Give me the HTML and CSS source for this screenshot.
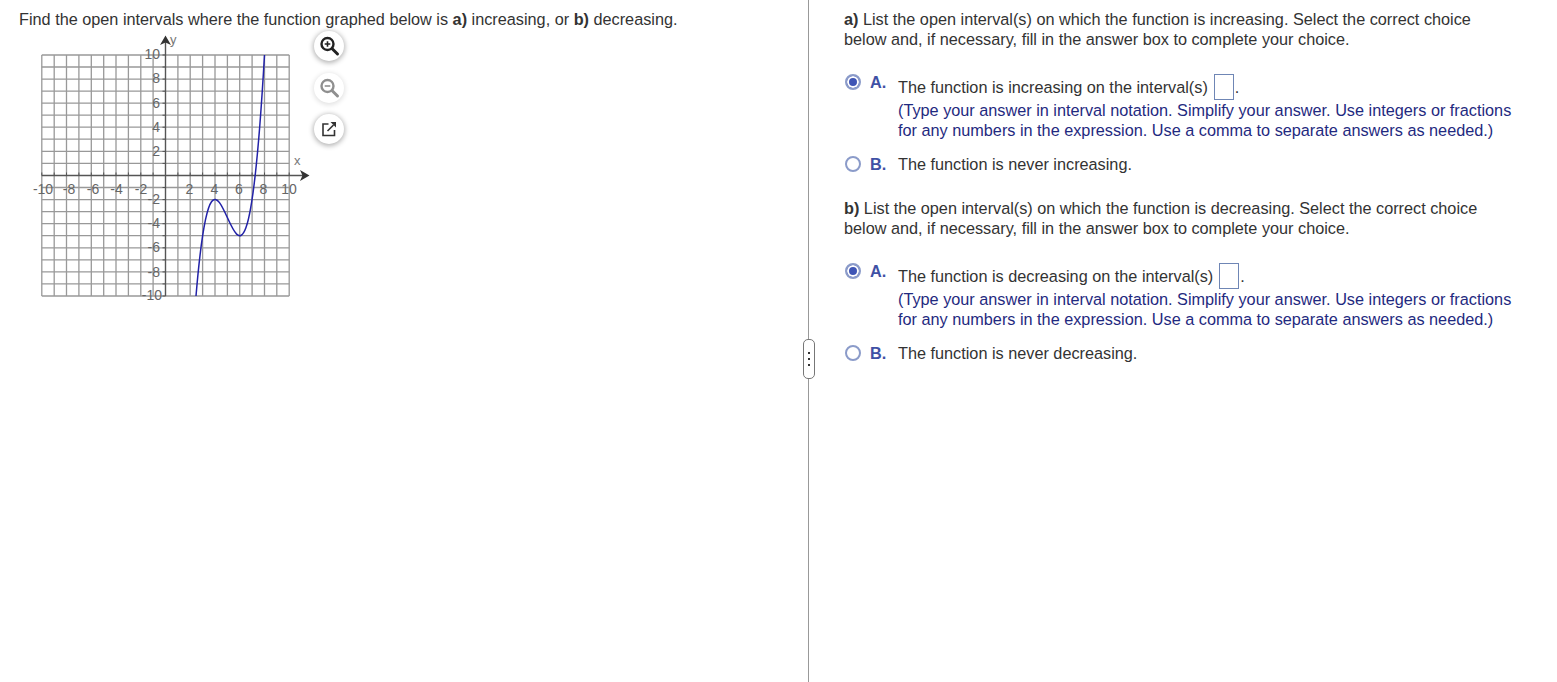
FILE: index.html
```html
<!DOCTYPE html>
<html lang="en">
<head>
<meta charset="UTF-8">
<meta name="viewport" content="width=device-width, initial-scale=1.0">
<title>Increasing and decreasing intervals</title>
<link rel="stylesheet" href="styles.css">
</head>
<body>
<div class="page">
  <div class="left">
    <p class="question">Find the open intervals where the function graphed below is <b>a)</b> increasing, or <b>b)</b> decreasing.</p>
    <div class="figure">
      <svg class="graph" width="295" height="276" viewBox="19 30 295 276">
        <path class="grid" d="M41.8 55V296M54.2 55V296M66.5 55V296M78.9 55V296M91.3 55V296M103.7 55V296M116 55V296M128.4 55V296M140.8 55V296M153.1 55V296M177.9 55V296M190.2 55V296M202.6 55V296M215 55V296M227.4 55V296M239.7 55V296M252.1 55V296M264.5 55V296M276.8 55V296M289.2 55V296"/>
        <path class="grid" d="M41.8 55H289.2M41.8 67H289.2M41.8 79.1H289.2M41.8 91.2H289.2M41.8 103.2H289.2M41.8 115.2H289.2M41.8 127.2H289.2M41.8 139.2H289.2M41.8 151.4H289.2M41.8 163.4H289.2M41.8 187.5H289.2M41.8 199.6H289.2M41.8 211.6H289.2M41.8 223.7H289.2M41.8 235.7H289.2M41.8 247.8H289.2M41.8 259.9H289.2M41.8 271.9H289.2M41.8 283.9H289.2M41.8 296H289.2"/>
        <path class="ticks" d="M41.8 175.5v-3M54.2 175.5v-3M66.5 175.5v-3M78.9 175.5v-3M91.3 175.5v-3M103.7 175.5v-3M116 175.5v-3M128.4 175.5v-3M140.8 175.5v-3M153.1 175.5v-3M177.9 175.5v-3M190.2 175.5v-3M202.6 175.5v-3M215 175.5v-3M227.4 175.5v-3M239.7 175.5v-3M252.1 175.5v-3M264.5 175.5v-3M276.8 175.5v-3M289.2 175.5v-3"/>
        <path class="ticks" d="M165.5 55h-3M165.5 67h-3M165.5 79.1h-3M165.5 91.2h-3M165.5 103.2h-3M165.5 115.2h-3M165.5 127.2h-3M165.5 139.2h-3M165.5 151.4h-3M165.5 163.4h-3M165.5 187.5h-3M165.5 199.6h-3M165.5 211.6h-3M165.5 223.7h-3M165.5 235.7h-3M165.5 247.8h-3M165.5 259.9h-3M165.5 271.9h-3M165.5 283.9h-3M165.5 296h-3"/>
        <path class="axis" d="M165.5 42V296M41.8 175.5H303"/>
        <path class="arrow" d="M165.5 35.5L171 45L165.5 42.5L160 45Z"/>
        <path class="arrow" d="M309.5 175.5L300 170L302.5 175.5L300 181Z"/>
        <g class="labels" text-anchor="middle">
          <text x="43" y="194">-10</text>
          <text x="69" y="194">-8</text>
          <text x="93" y="194">-6</text>
          <text x="116.5" y="194">-4</text>
          <text x="141" y="194">-2</text>
          <text x="189.5" y="194">2</text>
          <text x="214.5" y="194">4</text>
          <text x="239" y="194">6</text>
          <text x="263.5" y="194">8</text>
          <text x="289" y="194">10</text>
        </g>
        <g class="labels" text-anchor="end">
          <text x="160" y="59">10</text>
          <text x="160" y="83">8</text>
          <text x="160" y="108">6</text>
          <text x="160" y="132">4</text>
          <text x="160" y="156">2</text>
          <text x="160" y="204">-2</text>
          <text x="160" y="228">-4</text>
          <text x="160" y="252">-6</text>
          <text x="160" y="277">-8</text>
          <text x="162" y="300">-10</text>
        </g>
        <text class="labels axis-name" x="294" y="165">x</text>
        <text class="labels axis-name" x="170" y="44">y</text>
        <path class="curve" d="M196 296C218.8 24.5 241.6 455.2 264.5 55"/>
      </svg>
      <div class="tools">
        <div class="tool">
          <svg width="22" height="22" viewBox="0 0 22 22"><circle class="lens" cx="9.5" cy="9" r="6"/><path class="lens-mark" d="M6.7 9h5.6M9.5 6.2v5.6"/><path class="handle" d="M14.2 13.7L19.5 19"/></svg>
        </div>
        <div class="tool tool-off">
          <svg width="22" height="22" viewBox="0 0 22 22"><circle class="lens" cx="9.5" cy="9" r="6"/><path class="lens-mark" d="M6.7 9h5.6"/><path class="handle" d="M14.2 13.7L19.5 19"/></svg>
        </div>
        <div class="tool">
          <svg width="22" height="22" viewBox="0 0 22 22"><path class="popout" d="M10.5 6H5V17.5H16.5V12"/><path class="popout" d="M9.5 13L15.5 7"/><path class="popout-tip" d="M12.5 4H18V9.5Z"/></svg>
        </div>
      </div>
    </div>
  </div>

  <div class="right">
    <span class="handle-bar"><i></i><i></i><i></i></span>

    <p class="prompt"><b>a)</b> List the open interval(s) on which the function is increasing. Select the correct choice<br>below and, if necessary, fill in the answer box to complete your choice.</p>
    <div class="choice first">
      <span class="radio on"></span>
      <span class="letter">A.</span>
      <div class="body">
        The function is increasing on the interval(s)<span class="answer"></span>.
        <div class="hint">(Type your answer in interval notation. Simplify your answer. Use integers or fractions<br>for any numbers in the expression. Use a comma to separate answers as needed.)</div>
      </div>
    </div>
    <div class="choice">
      <span class="radio"></span>
      <span class="letter">B.</span>
      <div class="body">The function is never increasing.</div>
    </div>

    <p class="prompt second"><b>b)</b> List the open interval(s) on which the function is decreasing. Select the correct choice<br>below and, if necessary, fill in the answer box to complete your choice.</p>
    <div class="choice first">
      <span class="radio on"></span>
      <span class="letter">A.</span>
      <div class="body">
        The function is decreasing on the interval(s)<span class="answer"></span>.
        <div class="hint">(Type your answer in interval notation. Simplify your answer. Use integers or fractions<br>for any numbers in the expression. Use a comma to separate answers as needed.)</div>
      </div>
    </div>
    <div class="choice">
      <span class="radio"></span>
      <span class="letter">B.</span>
      <div class="body">The function is never decreasing.</div>
    </div>
  </div>
</div>
</body>
</html>
```

FILE: styles.css
```css
body {
  margin: 0;
  font-family: "Liberation Sans", Arial, sans-serif;
  font-size: 16.25px;
  line-height: 20px;
  color: #333;
  background: #fff;
}
p {
  margin: 0;
}
.page {
  display: flex;
  height: 682px;
  overflow: hidden;
}
.left {
  width: 789px;
  padding: 9px 0 0 19px;
  border-right: 1px solid #999;
}
.question {
  height: 21px;
}
.figure {
  display: flex;
  align-items: flex-start;
}
.graph {
  display: block;
}
.grid {
  fill: none;
  stroke: #999;
  stroke-width: 1.3;
}
.ticks {
  fill: none;
  stroke: #555;
  stroke-width: 1;
}
.axis {
  fill: none;
  stroke: #555;
  stroke-width: 1.4;
}
.arrow {
  fill: #333;
}
.labels {
  font-size: 14px;
  fill: #666;
}
.axis-name {
  font-size: 13px;
  fill: #777;
}
.curve {
  fill: none;
  stroke: #2222a8;
  stroke-width: 1.5;
}
.tools {
  display: flex;
  flex-direction: column;
  gap: 11.5px;
  margin-top: 1px;
}
.tool {
  width: 30px;
  height: 30px;
  border-radius: 50%;
  background: #fff;
  box-shadow: 0 1px 5px 1px #b5b5b5;
  display: flex;
  align-items: center;
  justify-content: center;
}
.lens {
  fill: none;
  stroke: #222;
  stroke-width: 2.4;
}
.lens-mark {
  fill: none;
  stroke: #222;
  stroke-width: 1.6;
}
.handle {
  stroke: #222;
  stroke-width: 3;
  stroke-linecap: round;
}
.tool-off {
  box-shadow: 0 1px 5px 1px #e2e2e2;
}
.tool-off .lens,
.tool-off .lens-mark,
.tool-off .handle {
  stroke: #8f8f8f;
}
.popout {
  fill: none;
  stroke: #333;
  stroke-width: 1.6;
}
.popout-tip {
  fill: #333;
}
.right {
  position: relative;
  flex: 1;
  padding: 9px 0 0 35px;
}
.handle-bar {
  position: absolute;
  left: -6px;
  top: 339px;
  width: 10px;
  height: 38px;
  border: 1px solid #777;
  border-radius: 5px;
  background: #fff;
  display: flex;
  flex-direction: column;
  align-items: center;
  justify-content: center;
  gap: 4px;
}
.handle-bar i {
  width: 2px;
  height: 2px;
  background: #333;
}
.second {
  margin-top: 24px;
}
.choice {
  position: relative;
  padding-left: 54px;
  margin-top: 14px;
}
.choice.first {
  margin-top: 28px;
}
.radio {
  position: absolute;
  left: 1px;
  top: 2px;
  box-sizing: border-box;
  width: 16px;
  height: 16px;
  border: 2px solid #8b9bc9;
  border-radius: 50%;
  background: #fff;
}
.radio.on {
  top: -3px;
  box-shadow: inset 0 0 0 2px #fff;
  background: #3f55b5;
}
.letter {
  position: absolute;
  left: 26px;
  top: 0;
  font-weight: bold;
  color: #3f51a5;
}
.first .letter {
  top: -5px;
}
.answer {
  display: inline-block;
  box-sizing: border-box;
  width: 20px;
  height: 26px;
  margin: -3px 1px -3px 6px;
  border: 1px solid #6f86b5;
  vertical-align: top;
}
.hint {
  margin-top: 3px;
  color: #1f2a80;
}
```
